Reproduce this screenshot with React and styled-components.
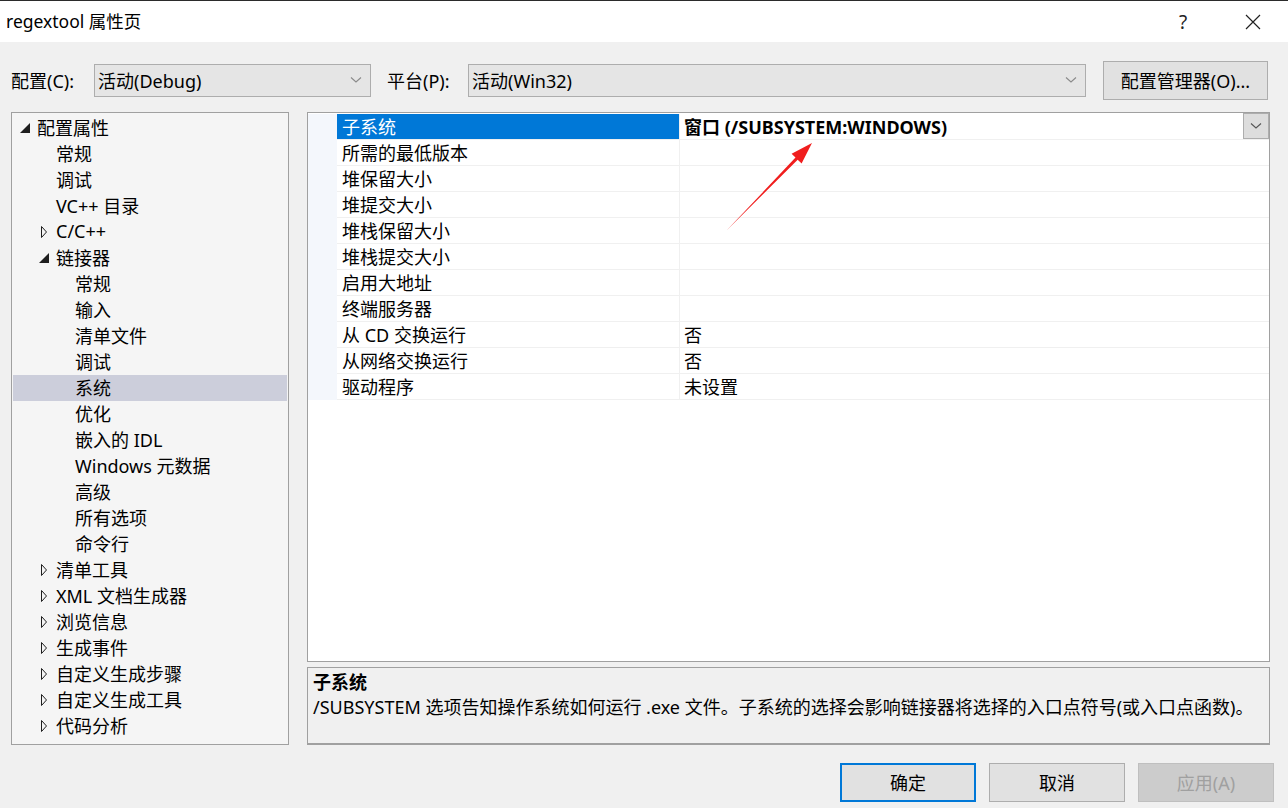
import React from "react";
import styled, { createGlobalStyle, css } from "styled-components";

const GlobalStyle = createGlobalStyle`
  html, body {
    margin: 0;
    padding: 0;
    background: #f0f0f0;
  }
  body {
    font-family: "Noto Sans", "Noto Sans CJK SC", sans-serif;
    font-size: 18px;
    color: #000;
  }
`;

const Window = styled.div`
  position: relative;
  width: 1288px;
  height: 808px;
  display: flex;
  flex-direction: column;
  background: #f0f0f0;
  overflow: hidden;
`;

const TitleBar = styled.div`
  height: 41px;
  border-top: 1px solid #2b2b2b;
  background: #fff;
  display: flex;
  align-items: center;
  padding-left: 6px;
  font-size: 17.5px;
`;

const TitleText = styled.div`
  flex: 1;
  padding-bottom: 2px;
`;

const TitleButton = styled.div`
  width: 70px;
  height: 41px;
  display: flex;
  align-items: center;
  justify-content: center;
  font-size: 19px;
  color: #222;
`;

const Toolbar = styled.div`
  height: 70px;
  padding: 6px 0 0 11px;
  box-sizing: border-box;
  display: flex;
  align-items: center;
`;

const FieldLabel = styled.div`
  width: ${({ w }) => w}px;
  margin-left: ${({ gap }) => gap || 0}px;
  white-space: nowrap;
`;

const Combo = styled.div`
  width: ${({ w }) => w}px;
  height: 33px;
  box-sizing: border-box;
  border: 1px solid #adadad;
  background: #e5e5e5;
  display: flex;
  align-items: center;
  padding: 0 8px 0 3px;
`;

const ComboText = styled.div`
  flex: 1;
  padding-bottom: 1px;
`;

const Button = styled.div`
  width: ${({ w }) => w}px;
  height: 39px;
  box-sizing: border-box;
  border: 1px solid #adadad;
  background: #e1e1e1;
  display: flex;
  align-items: center;
  justify-content: center;
  padding-bottom: 1px;
  margin-left: ${({ gap }) => gap || 0}px;
  ${({ primary }) =>
    primary &&
    css`
      border: 2px solid #0078d7;
    `}
  ${({ disabled }) =>
    disabled &&
    css`
      background: #cccccc;
      border-color: #bfbfbf;
      color: #a0a0a0;
    `}
`;

const Main = styled.div`
  height: 633px;
  display: flex;
  padding: 0 18px 0 11px;
  gap: 18px;
`;

const Tree = styled.div`
  width: 278px;
  box-sizing: border-box;
  border: 1px solid #a0a0a0;
  background: #f5f5f5;
  padding: 2px 1px 0;
`;

const TreeRow = styled.div`
  height: 26px;
  box-sizing: border-box;
  padding-bottom: 3px;
  display: flex;
  align-items: center;
  padding-left: ${({ level }) => 5 + level * 19}px;
  background: ${({ selected }) => (selected ? "#cccedb" : "transparent")};
  white-space: nowrap;
`;

const Twisty = styled.div`
  width: 19px;
  height: 26px;
  margin-bottom: -3px;
  display: flex;
  align-items: center;
  flex-shrink: 0;
`;

const RightCol = styled.div`
  flex: 1;
  display: flex;
  flex-direction: column;
  gap: 5px;
`;

const Grid = styled.div`
  height: 550px;
  box-sizing: border-box;
  border: 1px solid #a0a0a0;
  background: #fff;
  padding-top: 1px;
`;

const GridRow = styled.div`
  height: 26px;
  display: flex;
`;

const Margin = styled.div`
  width: 29px;
  background: #f4f7fc;
`;

const Cell = styled.div`
  box-sizing: border-box;
  border-bottom: 1px solid #f0f0f0;
  display: flex;
  align-items: center;
  white-space: nowrap;
  padding-bottom: 2px;
`;

const LabelCell = styled(Cell)`
  width: 343px;
  padding-left: 5px;
  border-right: 1px solid #f0f0f0;
  ${({ selected }) =>
    selected &&
    css`
      background: #0078d7;
      color: #fff;
    `}
`;

const ValueCell = styled(Cell)`
  flex: 1;
  padding-left: 4px;
  font-weight: ${({ bold }) => (bold ? 700 : 400)};
`;

const ValueText = styled.div`
  flex: 1;
`;

const DropButton = styled.div`
  width: 26px;
  height: 26px;
  box-sizing: border-box;
  border: 1px solid #adadad;
  background: #dddddd;
  display: flex;
  align-items: center;
  justify-content: center;
  align-self: flex-start;
  margin-top: -1px;
`;

const Description = styled.div`
  flex: 1;
  box-sizing: border-box;
  border: 1px solid #a0a0a0;
  border-bottom-width: 2px;
  background: #f0f0f0;
  padding: 2px 5px;
  line-height: 25px;
  white-space: nowrap;
`;

const DescTitle = styled.div`
  font-weight: 700;
`;

const Footer = styled.div`
  flex: 1;
  display: flex;
  justify-content: flex-end;
  align-items: center;
  padding: 12px 14px 0 0;
`;

const Annotation = styled.svg`
  position: absolute;
  left: 0;
  top: 0;
  pointer-events: none;
`;

const Chevron = ({ color = "#6d6d6d" }) => (
  <svg width="12" height="8" viewBox="0 0 12 8">
    <path d="M1 1.5 L6 6 L11 1.5" fill="none" stroke={color} strokeWidth="1.1" />
  </svg>
);

const Expanded = () => (
  <svg width="19" height="12" viewBox="0 0 19 12">
    <polygon points="12,1 12,11 2,11" fill="#1e1e1e" />
  </svg>
);

const Collapsed = () => (
  <svg width="19" height="12" viewBox="0 0 19 12">
    <polygon points="4.5,0.5 4.5,11.5 9.5,6" fill="none" stroke="#1e1e1e" strokeWidth="1" />
  </svg>
);

const treeItems = [
  { label: "配置属性", level: 0, state: "open" },
  { label: "常规", level: 1 },
  { label: "调试", level: 1 },
  { label: "VC++ 目录", level: 1 },
  { label: "C/C++", level: 1, state: "closed" },
  { label: "链接器", level: 1, state: "open" },
  { label: "常规", level: 2 },
  { label: "输入", level: 2 },
  { label: "清单文件", level: 2 },
  { label: "调试", level: 2 },
  { label: "系统", level: 2, selected: true },
  { label: "优化", level: 2 },
  { label: "嵌入的 IDL", level: 2 },
  { label: "Windows 元数据", level: 2 },
  { label: "高级", level: 2 },
  { label: "所有选项", level: 2 },
  { label: "命令行", level: 2 },
  { label: "清单工具", level: 1, state: "closed" },
  { label: "XML 文档生成器", level: 1, state: "closed" },
  { label: "浏览信息", level: 1, state: "closed" },
  { label: "生成事件", level: 1, state: "closed" },
  { label: "自定义生成步骤", level: 1, state: "closed" },
  { label: "自定义生成工具", level: 1, state: "closed" },
  { label: "代码分析", level: 1, state: "closed" }
];

const props = [
  { name: "子系统", value: "窗口 (/SUBSYSTEM:WINDOWS)", selected: true },
  { name: "所需的最低版本", value: "" },
  { name: "堆保留大小", value: "" },
  { name: "堆提交大小", value: "" },
  { name: "堆栈保留大小", value: "" },
  { name: "堆栈提交大小", value: "" },
  { name: "启用大地址", value: "" },
  { name: "终端服务器", value: "" },
  { name: "从 CD 交换运行", value: "否" },
  { name: "从网络交换运行", value: "否" },
  { name: "驱动程序", value: "未设置" }
];

export default function App() {
  return (
    <Window>
      <GlobalStyle />
      <TitleBar>
        <TitleText>regextool 属性页</TitleText>
        <TitleButton>?</TitleButton>
        <TitleButton>
          <svg width="16" height="16" viewBox="0 0 16 16">
            <path d="M1 1 L15 15 M15 1 L1 15" stroke="#222" strokeWidth="1.2" />
          </svg>
        </TitleButton>
      </TitleBar>

      <Toolbar>
        <FieldLabel w={83}>配置(C):</FieldLabel>
        <Combo w={277}>
          <ComboText>活动(Debug)</ComboText>
          <Chevron color="#8a8a8a" />
        </Combo>
        <FieldLabel w={81} gap={16}>平台(P):</FieldLabel>
        <Combo w={618}>
          <ComboText>活动(Win32)</ComboText>
          <Chevron color="#8a8a8a" />
        </Combo>
        <Button w={165} gap={17}>配置管理器(O)...</Button>
      </Toolbar>

      <Main>
        <Tree>
          {treeItems.map((item, i) => (
            <TreeRow key={i} level={item.level} selected={item.selected}>
              <Twisty>
                {item.state === "open" && <Expanded />}
                {item.state === "closed" && <Collapsed />}
              </Twisty>
              {item.label}
            </TreeRow>
          ))}
        </Tree>

        <RightCol>
          <Grid>
            {props.map((p, i) => (
              <GridRow key={i}>
                <Margin />
                <LabelCell selected={p.selected}>{p.name}</LabelCell>
                <ValueCell bold={p.selected}>
                  <ValueText>{p.value}</ValueText>
                  {p.selected && (
                    <DropButton>
                      <Chevron color="#555" />
                    </DropButton>
                  )}
                </ValueCell>
              </GridRow>
            ))}
          </Grid>
          <Description>
            <DescTitle>子系统</DescTitle>
            <div>
              /SUBSYSTEM 选项告知操作系统如何运行 .exe 文件。子系统的选择会影响链接器将选择的入口点符号(或入口点函数)。
            </div>
          </Description>
        </RightCol>
      </Main>

      <Footer>
        <Button w={136} primary>确定</Button>
        <Button w={136} gap={13}>取消</Button>
        <Button w={136} gap={13} disabled>应用(A)</Button>
      </Footer>

      <Annotation width="1288" height="808" viewBox="0 0 1288 808">
        <polygon
          points="727,230 795.5,157.6 791.6,153.8 812,143 801.6,163.6 797.7,159.8"
          fill="#f01e1e"
        />
      </Annotation>
    </Window>
  );
}
